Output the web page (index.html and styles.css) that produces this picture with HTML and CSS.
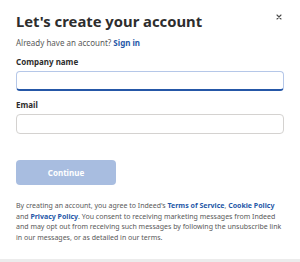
FILE: index.html
```html
<!DOCTYPE html>
<html lang="en">
<head>
    <meta charset="UTF-8">
    <meta name="viewport" content="width=device-width, initial-scale=1.0">
    <title>Create account</title>
    <link rel="stylesheet" href="styles.css">
</head>
<body>
    <div class="dialog">
        <div class="dialog-header">
            <h1>Let's create your account</h1>
            <button class="close-btn" aria-label="Close">
                <svg width="6" height="6" viewBox="0 0 6 6">
                    <path d="M1 1L5 5M5 1L1 5" stroke="#4b4b4b" stroke-width="1.1" stroke-linecap="round"/>
                </svg>
            </button>
        </div>

        <p class="signin">Already have an account? <a href="#">Sign in</a></p>

        <form class="signup-form">
            <label class="field">
                <span class="field-label">Company name</span>
                <input type="text" class="field-input focused">
            </label>
            <label class="field">
                <span class="field-label">Email</span>
                <input type="email" class="field-input">
            </label>
            <button type="button" class="continue-btn">Continue</button>
        </form>

        <p class="legal">
            By creating an account, you agree to Indeed's <a href="#">Terms of Service</a>, <a href="#">Cookie Policy</a><br>
            and <a href="#">Privacy Policy</a>. You consent to receiving marketing messages from Indeed<br>
            and may opt out from receiving such messages by following the unsubscribe link<br>
            in our messages, or as detailed in our terms.
        </p>
    </div>
    <div class="footer-bar"></div>
</body>
</html>
```

FILE: styles.css
```css
* {
    margin: 0;
    padding: 0;
    box-sizing: border-box;
}

body {
    background-color: #fff;
    font-family: "Noto Sans", Arial, sans-serif;
    color: #2d2d2d;
    width: 300px;
    height: 262px;
    overflow: hidden;
    display: flex;
    flex-direction: column;
}

.dialog {
    flex: 1;
    padding: 10px 16px 0 16px;
}

/* Header */
.dialog-header {
    display: flex;
    justify-content: space-between;
    align-items: center;
    height: 22px;
}

.dialog-header h1 {
    font-size: 14.8px;
    font-weight: 700;
    color: #2d2d2d;
}

.close-btn {
    background: none;
    border: none;
    width: 12px;
    height: 12px;
    display: flex;
    align-items: center;
    justify-content: center;
    margin-right: -1px;
    margin-top: -8px;
}

.signin {
    margin-top: 5px;
    font-size: 8px;
    line-height: 11px;
    color: #595959;
}

.signin a {
    color: #2557a7;
    font-weight: 700;
    text-decoration: none;
}

/* Form */
.signup-form {
    display: flex;
    flex-direction: column;
    margin-top: 8px;
}

.field {
    display: flex;
    flex-direction: column;
    margin-bottom: 8px;
}

.field-label {
    font-size: 8px;
    line-height: 11px;
    font-weight: 700;
    color: #2d2d2d;
    margin-bottom: 4px;
}

.field-input {
    height: 20px;
    border: 1px solid #d4d2d0;
    border-radius: 4px;
    background: #fff;
}

.field-input.focused {
    border-color: #b5c7e8;
    border-bottom: 2px solid #2557a7;
}

.continue-btn {
    margin-top: 18px;
    width: 100px;
    height: 25px;
    border: none;
    border-radius: 4px;
    background-color: #a8bde0;
    color: #fff;
    font-family: inherit;
    font-size: 8px;
    font-weight: 700;
}

/* Legal text */
.legal {
    margin-top: 16px;
    margin-right: -12px;
    font-size: 7px;
    line-height: 10.5px;
    color: #595959;
}

.legal a {
    color: #2557a7;
    font-weight: 700;
    text-decoration: none;
}

.footer-bar {
    height: 3px;
    background-color: #ececec;
}
```
